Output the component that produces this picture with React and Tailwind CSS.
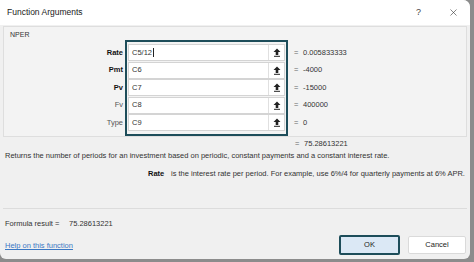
import { X } from "lucide-react";

const rows = [
  { label: "Rate", value: "C5/12", result: "0.005833333", bold: true, caret: true },
  { label: "Pmt", value: "C6", result: "-4000", bold: true },
  { label: "Pv", value: "C7", result: "-15000", bold: true },
  { label: "Fv", value: "C8", result: "400000" },
  { label: "Type", value: "C9", result: "0" },
];

const UpArrow = () => (
  <svg width="8" height="9" viewBox="0 0 8 9">
    <path d="M4 0.5 L7.5 4 H5.3 V7 H2.7 V4 H0.5 Z" fill="#222" />
    <rect x="1" y="7.8" width="6" height="1" fill="#222" />
  </svg>
);

const App = () => {
  return (
    <div className="w-[474px] h-[262px] bg-[#8c8c8c] font-['Liberation_Sans',Arial,sans-serif] text-[#222] overflow-hidden">
      <div className="w-[470px] h-[259px] bg-[#f0f0f0] rounded-tr-[7px] rounded-b-[6px] flex flex-col overflow-hidden">
        {/* title bar */}
        <div className="h-[25px] bg-white flex items-center pl-[7px] pr-[11px] shrink-0">
          <span className="text-[8.5px] text-[#1a1a1a]">Function Arguments</span>
          <span className="ml-auto text-[9px] text-[#444] mr-[27px]">?</span>
          <X size={11} strokeWidth={1.3} color="#333" />
        </div>

        {/* group box */}
        <div className="mx-[3px] mt-[1px] h-[111px] border border-[#dedede] bg-[#f3f3f3] shrink-0">
          <div className="text-[7px] text-[#333] pl-[6px] pt-[3px] leading-[9px]">NPER</div>
          <div className="flex mt-[1px]">
            <div className="w-[121px] flex flex-col pt-[4px] gap-[0.5px]">
              {rows.map((r) => (
                <div
                  key={r.label}
                  className={`h-[17px] flex items-center justify-end pr-[2px] text-[7.5px] ${r.bold ? "font-bold text-[#111]" : "text-[#555]"}`}
                >
                  {r.label}
                </div>
              ))}
            </div>
            <div className="w-[163px] border-2 border-[#1d4d5a] flex flex-col pt-[2px] pb-[3px] px-[1px] gap-[0.5px]">
              {rows.map((r) => (
                <div key={r.label} className="h-[17px] flex bg-white border border-[#d4d4d4]">
                  <div className="flex-1 flex items-center pl-[3px] text-[7.5px] text-[#333]">
                    {r.value}
                    {r.caret && <span className="w-[0.5px] h-[9px] bg-[#222] ml-[1px]" />}
                  </div>
                  <div className="w-[16px] border-l border-[#e0e0e0] flex items-center justify-center">
                    <UpArrow />
                  </div>
                </div>
              ))}
            </div>
            <div className="flex flex-col pt-[4px] gap-[0.5px]">
              {rows.map((r) => (
                <div key={r.label} className="h-[17px] flex items-center text-[7.5px] text-[#333]">
                  <span className="w-[9px] ml-[6px] text-[#666]">=</span>
                  <span>{r.result}</span>
                </div>
              ))}
            </div>
          </div>
        </div>

        {/* result & description */}
        <div className="flex items-center text-[7.5px] text-[#333] mt-[1px] h-[11px]">
          <span className="ml-[295px] w-[9px] text-[#666]">=</span>
          <span>75.28613221</span>
        </div>
        <div className="text-[7.5px] text-[#333] pl-[5px] mt-[2px] h-[10px] leading-[10px] whitespace-nowrap">
          Returns the number of periods for an investment based on periodic, constant payments and a constant interest rate.
        </div>
        <div className="flex text-[7.5px] text-[#333] mt-[8px] h-[10px] leading-[10px] whitespace-nowrap">
          <span className="ml-[148px] w-[23px] font-bold text-[#111]">Rate</span>
          <span>is the interest rate per period. For example, use 6%/4 for quarterly payments at 6% APR.</span>
        </div>

        <div className="mt-[29px] mx-[3px] border-t border-[#dcdcdc]" />

        <div className="flex text-[7.5px] text-[#333] pl-[5px] mt-[10px] h-[10px] leading-[10px]">
          <span className="w-[64px]">Formula result =</span>
          <span>75.28613221</span>
        </div>

        <div className="flex items-center pl-[5px] pr-[4px] mt-[6px]">
          <a href="#" className="text-[7.5px] text-[#3b78c4] underline mt-[2px]">
            Help on this function
          </a>
          <button className="ml-auto w-[61px] h-[20px] border-2 border-[#1d4d5a] bg-[#dbe8f5] rounded-[2px] text-[7.5px] text-[#222]">
            OK
          </button>
          <button className="ml-[8px] w-[58px] h-[18px] border border-[#dadada] bg-white rounded-[2px] text-[7.5px] text-[#222]">
            Cancel
          </button>
        </div>
      </div>
    </div>
  );
};

export default App;
